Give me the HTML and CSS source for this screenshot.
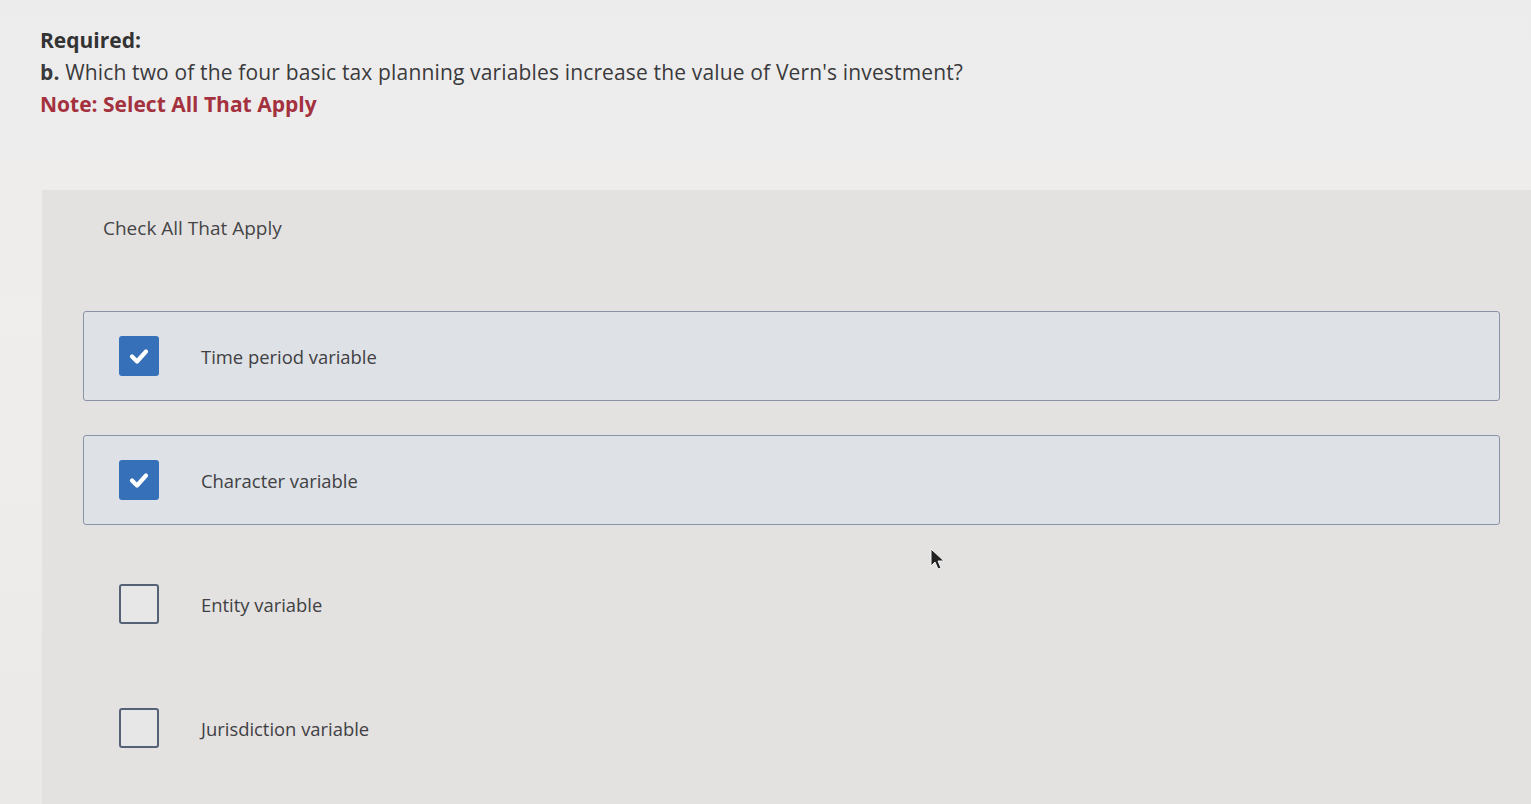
FILE: index.html
```html
<!DOCTYPE html>
<html>
<head>
<meta charset="utf-8">
<link rel="stylesheet" href="styles.css">
</head>
<body>
<div class="page">
  <div class="prompt">
    <div class="req">Required:</div>
    <div class="question"><b>b.</b> Which two of the four basic tax planning variables increase the value of Vern's investment?</div>
    <div class="note">Note: Select All That Apply</div>
  </div>
  <div class="panel">
    <div class="panel-title">Check All That Apply</div>
    <div class="options">
      <div class="option selected">
        <span class="box checked"><svg viewBox="0 0 40 40" width="40" height="40"><path d="M13 20.5l5 5 9-10" fill="none" stroke="#fff" stroke-width="4.2" stroke-linecap="round" stroke-linejoin="round"/></svg></span>
        <span class="label">Time period variable</span>
      </div>
      <div class="option selected">
        <span class="box checked"><svg viewBox="0 0 40 40" width="40" height="40"><path d="M13 20.5l5 5 9-10" fill="none" stroke="#fff" stroke-width="4.2" stroke-linecap="round" stroke-linejoin="round"/></svg></span>
        <span class="label">Character variable</span>
      </div>
      <div class="option">
        <span class="box"></span>
        <span class="label">Entity variable</span>
      </div>
      <div class="option">
        <span class="box"></span>
        <span class="label">Jurisdiction variable</span>
      </div>
    </div>
  </div>
  <svg class="cursor" viewBox="0 0 14 22" width="14" height="22"><path d="M1 1v17l4-4 3 7 3-1-3-7h6z" fill="#222" stroke="#f2f2f2" stroke-width="1"/></svg>
</div>
</body>
</html>
```

FILE: styles.css
```css
html, body {
  margin: 0;
  padding: 0;
}
body {
  background: #eeedec;
  font-family: "Open Sans", Lato, "Liberation Sans", sans-serif;
  color: #3a3a3c;
  width: 1531px;
  height: 804px;
  overflow: hidden;
}
.page {
  position: relative;
  height: 804px;
  overflow: hidden;
  background: linear-gradient(180deg, #edecec 0%, #efeeed 40%, #ebe9e8 100%);
}
.prompt {
  padding: 24px 0 0 40px;
  font-size: 21px;
  line-height: 32px;
}
.req {
  font-weight: 700;
  color: #333;
}
.question {
  letter-spacing: 0.15px;
}
.question b {
  font-weight: 700;
}
.note {
  font-weight: 700;
  color: #a3313e;
}
.panel {
  margin: 70px 0 0 42px;
  background: #e4e2e1;
  padding: 26px 31px 0 41px;
  height: 614px;
  box-sizing: border-box;
}
.panel-title {
  font-size: 19px;
  line-height: 24px;
  padding-left: 20px;
  color: #454547;
}
.options {
  margin-top: 71px;
  display: flex;
  flex-direction: column;
  gap: 34px;
}
.option {
  height: 90px;
  box-sizing: border-box;
  display: flex;
  align-items: center;
  padding-left: 35px;
  border: 1px solid transparent;
  border-radius: 3px;
}
.option.selected {
  background: #dee1e5;
  border-color: #8993a6;
}
.box {
  width: 40px;
  height: 40px;
  box-sizing: border-box;
  border: 2px solid #556275;
  border-radius: 3px;
  background: #e7e7e8;
  flex: none;
  display: flex;
}
.box.checked {
  background: #3570b8;
  border: none;
}
.label {
  margin-left: 42px;
  font-size: 18.4px;
  color: #404043;
}
.cursor {
  position: absolute;
  left: 930px;
  top: 548px;
}
```
